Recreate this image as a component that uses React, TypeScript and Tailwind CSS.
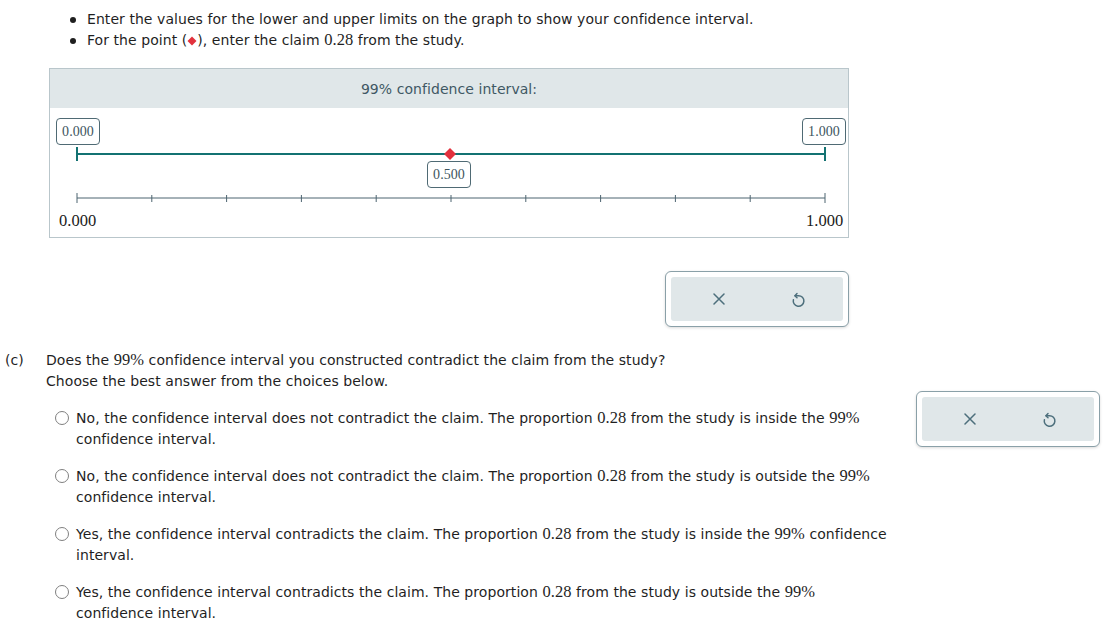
import React from "react";

const serif = { fontFamily: '"Liberation Serif", "Times New Roman", serif' };

function Num({ children }: { children: React.ReactNode }) {
  return (
    <span className="text-[16.5px] leading-[14px]" style={serif}>
      {children}
    </span>
  );
}

function UndoIcon() {
  return (
    <svg width="15" height="17" viewBox="0 0 14 16" fill="none" stroke="#4d6f7c" strokeWidth="1.4" strokeLinecap="round" strokeLinejoin="round">
      <path d="M5.6 2.4 L3.6 4.4 L5.6 6.4" />
      <path d="M3.8 4.4 H7 A5 5 0 1 1 2.2 8.2" />
    </svg>
  );
}

function XIcon() {
  return (
    <svg width="12" height="12" viewBox="0 0 12 12" stroke="#4d6f7c" strokeWidth="1.5" strokeLinecap="round">
      <path d="M1 1 L11 11 M11 1 L1 11" />
    </svg>
  );
}

function ButtonBox() {
  return (
    <div className="w-[184px] h-[56px] rounded-[6px] border border-[#8aa0a8] bg-white p-[5px] shadow-[0_1px_3px_rgba(0,0,0,0.15)]">
      <div className="flex h-full items-center rounded-[3px] bg-[#e0e7e9]">
        <div className="flex w-1/2 justify-center pl-[10px]">
          <XIcon />
        </div>
        <div className="flex w-1/2 justify-center pr-[4px]">
          <UndoIcon />
        </div>
      </div>
    </div>
  );
}

function ValueBox({ value, left, top }: { value: string; left: number; top: number }) {
  return (
    <div
      className="absolute flex h-[27px] w-[44px] items-center justify-center rounded-[4px] border border-[#4f6a74] bg-white text-[14px] text-[#3d5560]"
      style={{ left, top, ...serif }}
    >
      {value}
    </div>
  );
}

function Graph() {
  const ticks = Array.from({ length: 11 }, (_, i) => 27 + i * 74.8);
  return (
    <div className="ml-[49px] mt-[17px] w-[800px] border border-[#b9c6cb]">
      <div className="flex h-[39px] items-center justify-center pt-[1px] bg-[#e0e7e9] text-[14px] text-[#3f5864]">
        99% confidence interval:
      </div>
      <div className="relative h-[129px]">
        <svg className="absolute left-0 top-0" width="798" height="129">
          <line x1="27" y1="46" x2="775" y2="46" stroke="#137272" strokeWidth="2" />
          <line x1="27" y1="39" x2="27" y2="53" stroke="#137272" strokeWidth="2" />
          <line x1="775" y1="39" x2="775" y2="53" stroke="#137272" strokeWidth="2" />
          <polygon points="400,40 406,46 400,52 394,46" fill="#e2313d" />
          <line x1="27" y1="90" x2="775" y2="90" stroke="#4d6470" strokeWidth="1" />
          {ticks.map((x, i) => (
            <line
              key={i}
              x1={x}
              x2={x}
              y1={i === 0 || i === 10 ? 85 : 87}
              y2={i === 0 || i === 10 ? 95 : 94}
              stroke="#4d6470"
              strokeWidth="1"
            />
          ))}
        </svg>
        <ValueBox value="0.000" left={6} top={10} />
        <ValueBox value="1.000" left={752} top={10} />
        <ValueBox value="0.500" left={377} top={53} />
        <div className="absolute left-[9px] top-[101px] text-[16.5px] text-[#1a1a1a]" style={serif}>
          0.000
        </div>
        <div className="absolute left-[756px] top-[101px] text-[16.5px] text-[#1a1a1a]" style={serif}>
          1.000
        </div>
      </div>
    </div>
  );
}

function Option({ children }: { children: React.ReactNode }) {
  return (
    <div className="flex items-start">
      <div className="mt-[3px] h-[14px] w-[14px] shrink-0 rounded-full border border-[#808080] bg-white" />
      <div className="ml-[7px] w-[814px] leading-[21px]">{children}</div>
    </div>
  );
}

export default function App() {
  return (
    <div
      className="min-h-[637px] w-[1116px] bg-white text-[14px] text-[#1f1f1f] tracking-[0.06px]"
      style={{ fontFamily: '"DejaVu Sans", Verdana, sans-serif' }}
    >
      <ul className="pt-[9px] pl-[70px] leading-[21px]">
        <li className="flex items-start">
          <span className="mr-[11px] mt-[8px] h-[6px] w-[6px] shrink-0 rounded-full bg-[#1f1f1f]" />
          <span>Enter the values for the lower and upper limits on the graph to show your confidence interval.</span>
        </li>
        <li className="flex items-start">
          <span className="mr-[11px] mt-[8px] h-[6px] w-[6px] shrink-0 rounded-full bg-[#1f1f1f]" />
          <span>
            For the point (
            <svg className="inline-block align-[-1px]" width="10" height="10" viewBox="0 0 10 10">
              <polygon points="5,0.5 9.5,5 5,9.5 0.5,5" fill="#e2313d" />
            </svg>
            ), enter the claim <Num>0.28</Num> from the study.
          </span>
        </li>
      </ul>

      <Graph />

      <div className="ml-[665px] mt-[33px]">
        <ButtonBox />
      </div>

      <div className="mt-[23px] flex leading-[21px]">
        <div className="w-[46px] pl-[5px]">(c)</div>
        <div>
          <div>
            Does the <Num>99%</Num> confidence interval you constructed contradict the claim from the study?
          </div>
          <div>Choose the best answer from the choices below.</div>
        </div>
      </div>

      <div className="flex">
        <div className="ml-[55px] flex flex-col gap-[16px] pt-[16px]">
          <Option>
            No, the confidence interval does not contradict the claim. The proportion <Num>0.28</Num> from the study is inside the <Num>99%</Num> confidence interval.
          </Option>
          <Option>
            No, the confidence interval does not contradict the claim. The proportion <Num>0.28</Num> from the study is outside the <Num>99%</Num> confidence interval.
          </Option>
          <Option>
            Yes, the confidence interval contradicts the claim. The proportion <Num>0.28</Num> from the study is inside the <Num>99%</Num> confidence interval.
          </Option>
          <Option>
            Yes, the confidence interval contradicts the claim. The proportion <Num>0.28</Num> from the study is outside the <Num>99%</Num> confidence interval.
          </Option>
        </div>
        <div className="ml-auto mr-[16px] mt-[-1px]">
          <ButtonBox />
        </div>
      </div>
    </div>
  );
}
